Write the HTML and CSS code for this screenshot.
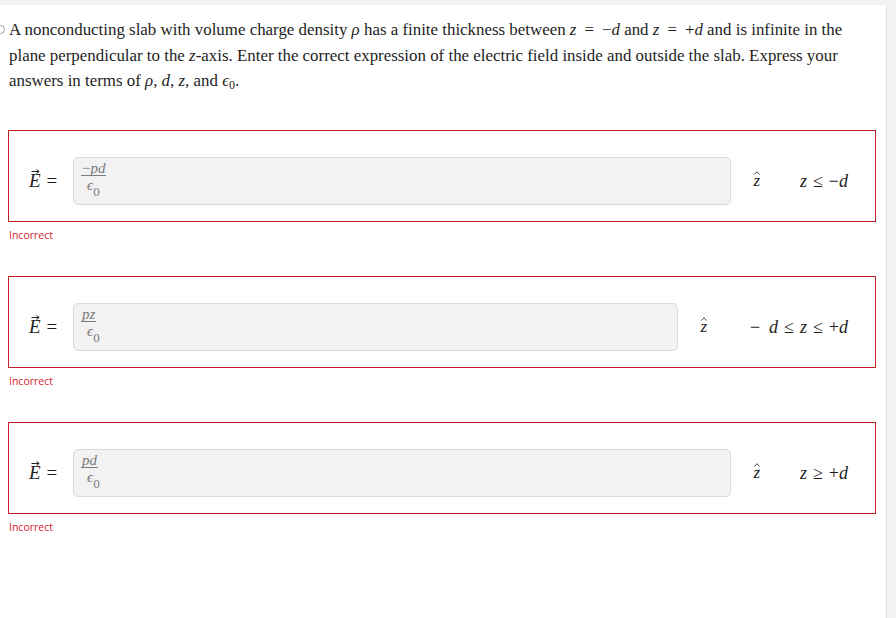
FILE: index.html
```html
<!DOCTYPE html>
<html>
<head>
<meta charset="utf-8">
<link rel="stylesheet" href="styles.css">
</head>
<body>
<div class="page">
  <div class="card">
    <p class="prompt"><span class="qicon"></span>A nonconducting slab with volume charge density <i>ρ</i> has a finite thickness between <i>z</i><span class="op">=</span>−<i>d</i> and <i>z</i><span class="op">=</span>+<i>d</i> and is infinite in the plane perpendicular to the <i>z</i>-axis. Enter the correct expression of the electric field inside and outside the slab. Express your answers in terms of <i>ρ</i>, <i>d</i>, <i>z</i>, and <i>ϵ</i><sub class="sub">0</sub>.</p>

    <div class="answer">
      <div class="box">
        <span class="lhs"><span class="vec"><i>E</i><svg class="arrow" width="9" height="5" viewBox="0 0 9 5"><path d="M0.5 2.5H8M5.5 0.5L8.2 2.5L5.5 4.5" fill="none" stroke="#222" stroke-width="1"/></svg></span><span class="eq">=</span></span>
        <div class="input">
          <span class="frac"><span class="num">−<i>pd</i></span><span class="den"><i>ϵ</i><sub>0</sub></span></span>
        </div>
        <span class="unit"><i>z</i><svg class="hat" width="6" height="4" viewBox="0 0 6 4"><path d="M0.5 3.5L3 0.7L5.5 3.5" fill="none" stroke="#333" stroke-width="0.9"/></svg></span>
        <span class="range"><i>z</i><span class="rop">≤</span>−<i>d</i></span>
      </div>
      <div class="status">Incorrect</div>
    </div>

    <div class="answer">
      <div class="box">
        <span class="lhs"><span class="vec"><i>E</i><svg class="arrow" width="9" height="5" viewBox="0 0 9 5"><path d="M0.5 2.5H8M5.5 0.5L8.2 2.5L5.5 4.5" fill="none" stroke="#222" stroke-width="1"/></svg></span><span class="eq">=</span></span>
        <div class="input">
          <span class="frac"><span class="num"><i>pz</i></span><span class="den"><i>ϵ</i><sub>0</sub></span></span>
        </div>
        <span class="unit"><i>z</i><svg class="hat" width="6" height="4" viewBox="0 0 6 4"><path d="M0.5 3.5L3 0.7L5.5 3.5" fill="none" stroke="#333" stroke-width="0.9"/></svg></span>
        <span class="range wide">−<span class="sp"></span><i>d</i><span class="rop">≤</span><i>z</i><span class="rop">≤</span>+<i>d</i></span>
      </div>
      <div class="status">Incorrect</div>
    </div>

    <div class="answer">
      <div class="box">
        <span class="lhs"><span class="vec"><i>E</i><svg class="arrow" width="9" height="5" viewBox="0 0 9 5"><path d="M0.5 2.5H8M5.5 0.5L8.2 2.5L5.5 4.5" fill="none" stroke="#222" stroke-width="1"/></svg></span><span class="eq">=</span></span>
        <div class="input">
          <span class="frac"><span class="num"><i>pd</i></span><span class="den"><i>ϵ</i><sub>0</sub></span></span>
        </div>
        <span class="unit"><i>z</i><svg class="hat" width="6" height="4" viewBox="0 0 6 4"><path d="M0.5 3.5L3 0.7L5.5 3.5" fill="none" stroke="#333" stroke-width="0.9"/></svg></span>
        <span class="range"><i>z</i><span class="rop">≥</span>+<i>d</i></span>
      </div>
      <div class="status">Incorrect</div>
    </div>
  </div>
</div>
</body>
</html>
```
FILE: styles.css
```css
html, body {
  margin: 0;
  padding: 0;
  background: #f2f2f2;
  height: 100%;
}
body {
  font-family: "Liberation Serif", "Times New Roman", serif;
  color: #1e1e1e;
  overflow: hidden;
}
.page {
  padding-top: 5px;
  height: 100%;
  box-sizing: border-box;
}
.card {
  width: 887px;
  height: 100%;
  background: #fff;
  border-right: 1px solid #e2e2e2;
  box-sizing: border-box;
  padding: 12px 0 0 8px;
}
.prompt {
  margin: 0;
  padding-left: 1px;
  font-size: 16.9px;
  line-height: 25.5px;
  width: 850px;
}
.op {
  margin: 0 8px;
}
.qicon {
  display: inline-block;
  width: 7px;
  height: 7px;
  border: 1px solid #9a9a9a;
  border-radius: 50%;
  margin-left: -13px;
  margin-right: 4px;
  vertical-align: 1px;
}
.sub {
  font-size: 12px;
  vertical-align: -3px;
  line-height: 1;
}
.prompt + .answer {
  margin-top: 36px;
}
.box {
  width: 868px;
  height: 92px;
  box-sizing: border-box;
  border: 1px solid #c41f27;
  padding: 26px 27px 15px 20px;
  display: flex;
  align-items: center;
}
.lhs {
  font-size: 19px;
  width: 44px;
  flex: none;
  white-space: nowrap;
  display: flex;
  align-items: baseline;
}
.vec {
  position: relative;
  display: inline-block;
}
.arrow {
  position: absolute;
  left: 2px;
  top: -1px;
}
.eq {
  margin-left: 6px;
}
.input {
  flex: 1;
  height: 48px;
  box-sizing: border-box;
  background: #f2f2f2;
  border: 1px solid #dadada;
  border-radius: 5px;
  display: flex;
  align-items: center;
  padding-left: 7px;
}
.frac {
  display: inline-flex;
  flex-direction: column;
  align-items: flex-start;
  color: #7a7a7a;
  font-size: 15px;
  line-height: 13px;
  margin-top: -3px;
}
.num {
  border-bottom: 1px solid #7a7a7a;
  padding: 0 1px 0 1px;
  white-space: nowrap;
}
.den {
  padding-left: 6px;
  padding-top: 3px;
  line-height: 12px;
}
.den sub {
  font-family: "DejaVu Serif", serif;
  font-size: 11px;
  vertical-align: -6px;
  line-height: 1;
}
.unit {
  position: relative;
  margin-left: 22px;
  font-size: 17px;
  flex: none;
}
.hat {
  position: absolute;
  left: 1px;
  top: 0px;
}
.range {
  margin-left: 37px;
  font-size: 18px;
  width: 51px;
  flex: none;
  white-space: nowrap;
  text-align: right;
}
.range.wide {
  margin-left: 41px;
  width: 100px;
}
.rop {
  margin: 0 6px;
}
.sp {
  display: inline-block;
  width: 9px;
}
.status {
  font-family: "Open Sans", "Liberation Sans", sans-serif;
  font-size: 10.5px;
  color: #d7222c;
  padding-left: 1px;
  height: 54px;
  line-height: 26px;
}
```
